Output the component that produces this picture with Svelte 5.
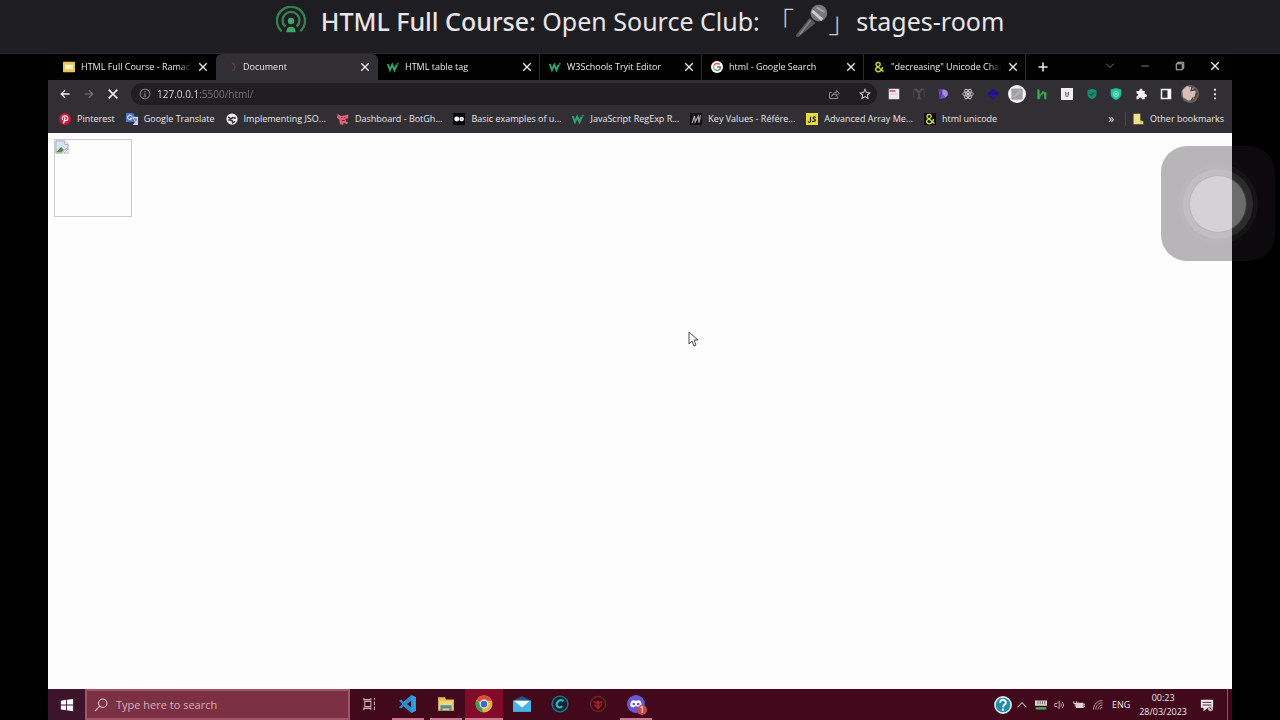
<script>
    const icons = {
        slides: '<rect x="0" y="1" width="16" height="14" rx="1" fill="#e8c65c"/><rect x="3" y="5" width="10" height="6" fill="#fff3c0"/>',
        spinner: '<path d="M9 2a6 6 0 0 1 1 11" fill="none" stroke="#623b42" stroke-width="2"/>',
        w3: '<path d="M1 4l3 8 3-7 3 7 3-7" fill="none" stroke="#2aa575" stroke-width="2.600"/><path d="M13 3h2l-1 3" fill="none" stroke="#2aa575" stroke-width="1.200"/>',
        google: '<circle cx="8" cy="8" r="8" fill="#fff"/><path d="M11.500 4.800A4.600 4.600 0 0 0 4 6" fill="none" stroke="#d8574c" stroke-width="2"/><path d="M4 6a4.600 4.600 0 0 0 0 4" fill="none" stroke="#d8a93b" stroke-width="2"/><path d="M4 10a4.600 4.600 0 0 0 7 1.500" fill="none" stroke="#579f6a" stroke-width="2"/><path d="M8 8h4.600a4.600 4.600 0 0 1-1.500 3.500" fill="none" stroke="#5871b5" stroke-width="2"/>',
        amp: '<rect width="16" height="16" fill="#080a03"/><path d="M14 14L5 6.500C2.500 4 5 1.500 7.500 2S10.500 5.500 8 7L5.500 8.500C1.500 11 4.500 15 8 14s4.500-4 4.500-6" fill="none" stroke="#bfd63e" stroke-width="1.900"/>',
        pinterest: '<circle cx="8" cy="8" r="8" fill="#cf153c"/><path d="M6 14l2-8M5 9C3 6 6 3.500 8.500 3.700c4 .3 4 6.300.5 6.500-1 0-1.700-.5-2-1" fill="none" stroke="#fff" stroke-width="1.700"/>',
        translate: '<path d="M0 0h10l3 12H0z" fill="#4f76d3"/><path d="M8 5h8v11H9l3-4z" fill="#c9d2eb"/><path d="M7.500 4A3 3 0 1 0 8 7H5.500" fill="none" stroke="#fff" stroke-width="1.300"/><path d="M10 8h4m-2-1c0 2 1 3 2 4m0-3c0 2-2 3-3 4" fill="none" stroke="#627090"/>',
        globe: '<circle cx="8" cy="8" r="7.500" fill="#eee"/><path d="M3 5q3 4 6 1l4 1M3 9l5 1 1 3 3-2" fill="none" stroke="#343236" stroke-width="2"/>',
        ghost: '<path d="M1 1l4 3 6-1 4-1v5l-4 1 1 3 3 2-2 2-4-2-1 3-4-1-1-6-3-3z" fill="#dd6473"/><path d="M6 6h1m3 0h1M7 10h3" stroke="#531e2b" stroke-width="1.500"/>',
        dots: '<rect width="16" height="16" fill="#050505"/><circle cx="5" cy="8" r="3.300" fill="#fff"/><circle cx="11.500" cy="8" r="3" fill="#fff"/><path d="M11.500 7v2" stroke="#444"/>',
        mdn: '<rect width="16" height="16" fill="#111014"/><path d="M3 13L6 4l1 8 4-8 1 9 2-10" fill="none" stroke="#aaa8ad" stroke-width="1.600"/>',
        js: '<rect width="16" height="16" fill="#e9dd35"/><path d="M6 5v6c0 2-3 2-3 0M13 6c-3-2-5 1-2 2s2 4-3 3" fill="none" stroke="#222216" stroke-width="1.600"/>',
        folder: '<path d="M2 1h9v9l4 1v4H2z" fill="#eee184"/><path d="M11 10l4 1-4 4z" fill="#cbbb5d"/>',
        back: '<path d="M14 8H3m5-5L3 8l5 5" fill="none" stroke="#eee" stroke-width="1.700"/>',
        forward: '<path d="M2 8h11M8 3l5 5-5 5" fill="none" stroke="#78767a" stroke-width="1.500"/>',
        close: '<path d="M3 3l10 10M13 3L3 13" fill="none" stroke="#eee" stroke-width="1.800"/>',
        plus: '<path d="M8 2v12M2 8h12" stroke="#eee" stroke-width="2"/>',
        down: '<path d="M3 5l5 5 5-5" fill="none" stroke="#77757a" stroke-width="1.300"/>',
        minimise: '<path d="M3 8h10" stroke="#77757a" stroke-width="1.400"/>',
        restore: '<path d="M3 5h8v8H3zM5 5V3h8v8h-2" fill="none" stroke="#c4c3c6" stroke-width="1.300"/>',
        info: '<circle cx="8" cy="8" r="6.500" fill="none" stroke="#8c898f" stroke-width="1.300"/><path d="M8 7v5M8 4v1.600" stroke="#8c898f" stroke-width="1.600"/>',
        share: '<path d="M5 6H2v8h11v-3M5 11c1-4 4-5 6-5V3l4 4-4 4V8c-2 0-4 0-6 3z" fill="none" stroke="#96949a" stroke-width="1.200"/>',
        star: '<path d="M8 1.800l1.900 4.100 4.500.5-3.300 3 1 4.400L8 11.500l-4.100 2.300 1-4.400-3.300-3 4.500-.5z" fill="none" stroke="#c9c7cb" stroke-width="1.400"/>',
        news: '<rect x="1" y="1" width="14" height="14" fill="#eee7ed"/><path d="M2 4h8" stroke="#c6485f" stroke-width="2"/><path d="M3 8h10" stroke="#d7b9c4"/>',
        ymark: '<path d="M1 2h4l3 5 3-5h4M5 14h6M8 6v8" fill="none" stroke="#504d52" stroke-width="2.600"/><path d="M1 3v10m14-10v10" stroke="#403d42" stroke-width="2"/>',
        purple: '<path d="M2 2h7l5 2 1 5-4 4-7 2z" fill="#7652c6"/><path d="M8 2c7 0 8 8 3 10L7 7z" fill="#a98be0"/><path d="M2 2l4 4-2 8" stroke="#563aa8" stroke-width="2" fill="none"/>',
        react: '<g fill="none" stroke="#c8c6cc" stroke-width="1.200"><ellipse cx="8" cy="8" rx="7" ry="2.800"/><ellipse cx="8" cy="8" rx="7" ry="2.800" transform="rotate(60 8 8)"/><ellipse cx="8" cy="8" rx="7" ry="2.800" transform="rotate(120 8 8)"/></g><circle cx="8" cy="8" r="1.500" fill="#eee"/>',
        diamond: '<path d="M8 1l8 7-8 7-8-7z" fill="#22108f"/><path d="M2 9h12l-6 5z" fill="#2c1b8a"/>',
        square: '<circle cx="8" cy="8" r="8" fill="#f4f3f5"/><rect x="3" y="3" width="10" height="10" rx="1" fill="#a2a1a2"/><path d="M5 11l6-6" stroke="#b4b3b4" stroke-width="2"/>',
        grass: '<path d="M2 15V1l3 2v6l4-5 5 2v9h-3V8l-4 1-2 6z" fill="#379b51"/><path d="M3 2v12M12 7v7" stroke="#42ae5b" stroke-width="1.500"/>',
        ublock: '<rect width="16" height="16" fill="#f1eef2"/><path d="M6 5v4c0 3 4 3 4 0V5M8 6v3" fill="none" stroke="#79757b" stroke-width="1.400"/>',
        shield: '<path d="M8 1l6 2v5c0 4-3 6-6 7-3-1-6-3-6-7V3z" fill="#188d76"/><path d="M5 8l2 2 4-4" fill="none" stroke="#074f47" stroke-width="1.600"/>',
        shieldx: '<path d="M8 0l7 2v6c0 4-4 7-7 8-3-1-7-4-7-8V2z" fill="#1bc39a"/><path d="M8 4l3 2v4l-3 2-3-2V6zM6 6l4 4m0-4l-4 4" fill="none" stroke="#b7f1df"/>',
        puzzle: '<path d="M2 4h4c-1-4 5-4 4 0h3v4c4-1 4 5 0 4v3H9c0-3-4-3-4 0H2v-4c3 0 3-4 0-4z" fill="#f2f0f3"/>',
        panel: '<path d="M2 2h12v12H2z" fill="none" stroke="#f5f5f5" stroke-width="2"/><path d="M10 2h4v12h-4z" fill="#fff"/>',
        profile: '<circle cx="8" cy="8" r="8" fill="#6d605b"/><path d="M1 5l4-4 5 1 3 4-1 6-5 2-5-3z" fill="#d7beb8"/><path d="M10 1l-1 4 4-1m-1 8l2-5m-5 7l2-3" stroke="#453b39" stroke-width="1.200" fill="none"/>',
        menu: '<path d="M8 1v2.500M8 7v2.500m0 3V15" stroke="#eee" stroke-width="2.500"/>',
        windows: '<path d="M1 3l6-1v5.500H1zM8 2l7-1v6.500H8zM1 8.500h6V14l-6-1zM8 8.500h7V15l-7-1z" fill="#fff"/>',
        search: '<circle cx="10" cy="6" r="4.800" fill="none" stroke="#e7bdc7" stroke-width="1.300"/><path d="M7 9l-6 6" stroke="#e7bdc7" stroke-width="1.400"/>',
        taskview: '<path d="M1 1v2h8V1M1 15v-2h8v2M2 5h7v6H2zM13 1v2m0 2v4m0 2v4" fill="none" stroke="#cfabba" stroke-width="1.200"/>',
        vscode: '<path d="M11 0l4 2v12l-4 2-7-6-2 2-2-1 3-3-3-3 2-1 2 2zM11 5L7 8l4 3z" fill="#278ed0"/><path d="M11 0l4 2v12l-4 2z" fill="#359bda"/>',
        explorer: '<path d="M1 2h6l1 2h7v10H1z" fill="#e6bd51"/><path d="M2 5h12v8H2z" fill="#f1d877"/><path d="M3 9h10v5h-2v-2H5v2H3z" fill="#498eaf"/>',
        chrome: '<circle cx="8" cy="8" r="7.500" fill="#e4b63e"/><path d="M8 8L1.500 4.500A7.500 7.500 0 0 1 15 5H8z" fill="#dc4d3e"/><path d="M1.500 4.500L6 10l1 5.400A7.500 7.500 0 0 1 1.500 4.500z" fill="#3d9c58"/><circle cx="8" cy="8" r="3.900" fill="#fff"/><circle cx="8" cy="8" r="3" fill="#3f68cc"/>',
        mail: '<path d="M0 5l8-4 8 4v9H0z" fill="#1d5f92"/><path d="M0 5h16v10H0z" fill="#45b5e6"/><path d="M1 5h14l-7 6z" fill="#fff"/>',
        ccleaner: '<circle cx="8" cy="8" r="7" fill="#11252e" stroke="#16798c" stroke-width="1.200"/><path d="M11 5.500C8 3 5 6 5 8.500s3 3.500 5 1.500" fill="none" stroke="#25b6d0" stroke-width="1.900"/>',
        fox: '<circle cx="8" cy="8" r="6.700" fill="#370a12" stroke="#742024" stroke-width="1.200"/><path d="M4 5l3 1 1-2 1 2 3-1-1 5-3 3-3-3z" fill="#a91c2c"/><path d="M5 7l2 2m4-2L9 9" stroke="#360713"/>',
        discord: '<circle cx="8" cy="8" r="8" fill="#6757d3"/><path d="M3 10c0-4 1-6 4-5h2c3-1 4 1 4 5l-3 1-1-1H7l-1 1z" fill="#fff"/><circle cx="6" cy="8" r="1.200" fill="#6757d3"/><circle cx="10" cy="8" r="1.200" fill="#6757d3"/>',
        help: '<circle cx="8" cy="8" r="7.200" fill="#238dab" stroke="#d8edf2" stroke-width="1.400"/><path d="M5.500 6c0-4 5-3 5 0 0 2-2.500 1.600-2.500 4M8 11v2" fill="none" stroke="#fff" stroke-width="1.700"/>',
        up: '<path d="M2 11l6-6 6 6" fill="none" stroke="#d6b5bf" stroke-width="1.400"/>',
        ram: '<path d="M0 2h16v7H0z" fill="#d8d5d4"/><path d="M4 3v4m3-4v4m3-4v4m3-4v4" stroke="#58434b"/><path d="M1 11h14v3H1z" fill="#4ab85c"/>',
        sound: '<path d="M1 6h3l3-3v10L4 10H1z" fill="none" stroke="#cda9b5" stroke-width="1.200"/><path d="M9 6q2 2 0 4m2-6q4 4 0 8" fill="none" stroke="#cda9b5" stroke-width="1.200"/>',
        battery: '<path d="M5 5h9v7H4V8" fill="#ded5d8"/><path d="M14 7h2v3h-2M1 3v3h4V3M3 6v4" stroke="#ded5d8" fill="none" stroke-width="1.300"/>',
        wifi: '<path d="M2 14C2 7 7 2 14 2M5 14c0-5 4-9 9-9M8 14c0-3 3-6 6-6M11 14c0-2 1-3 3-3" fill="none" stroke="#c19caa" stroke-width="1.200"/>',
        notice: '<path d="M1 2h14v9H9l-5 4v-4H1z" fill="#f3e9ed"/><path d="M3 5h10M3 8h10" stroke="#552335" stroke-width="1.100"/><circle cx="12" cy="12" r="3" fill="#c3adb5"/><path d="M11 11l2 2" stroke="#552335"/>',
        broken: '<path d="M1 1h10l4 4v4l-4 2-3 4H1z" fill="#d4e4f5" stroke="#9b9fa3"/><path d="M2 13l5-5 3 3-3 3H2z" fill="#538b4c"/><path d="M11 1v4h4M10 15l5-5v5z" fill="#fff" stroke="#aaa"/>',
        live: '<path d="M3 13.500a7.500 7.500 0 1 1 10 0M5 11a4.500 4.500 0 1 1 6 0" fill="none" stroke="#36804f" stroke-width="1.300"/><circle cx="8" cy="8" r="1.700" fill="#43a466"/><path d="M5.500 14q0-3 2.500-3t2.500 3z" fill="#43a466"/>',
        mic: '<path d="M7.500 6.500L1.500 14q-.5 1.500 1 1L10 9z" fill="#59595b"/><path d="M8 7.500L3 14" stroke="#858587" stroke-width=".7"/><circle cx="11.500" cy="4.500" r="3.700" fill="#78787a"/><path d="M8.500 3.500l4.500 4" stroke="#ccc" stroke-width="1.200"/><path d="M10.500 2l3.500 2" stroke="#aaa" stroke-width=".8"/>'
    };

    const tabs = [
        { icon: "slides", title: "HTML Full Course - Ramad" },
        { icon: "spinner", title: "Document", active: true },
        { icon: "w3", title: "HTML table tag" },
        { icon: "w3", title: "W3Schools Tryit Editor" },
        { icon: "google", title: "html - Google Search" },
        { icon: "amp", title: "\"decreasing\" Unicode Char" }
    ];

    const bookmarks = [
        ["pinterest", "Pinterest"],
        ["translate", "Google Translate"],
        ["globe", "Implementing JSO..."],
        ["ghost", "Dashboard - BotGh..."],
        ["dots", "Basic examples of u..."],
        ["w3", "JavaScript RegExp R..."],
        ["mdn", "Key Values - Référe..."],
        ["js", "Advanced Array Me..."],
        ["amp", "html unicode"]
    ];

    const extensions = ["news", "ymark", "purple", "react", "diamond", "square", "grass", "ublock", "shield", "shieldx", "puzzle", "panel", "profile", "menu"];

    const apps = [
        { icon: "taskview" },
        { icon: "vscode", open: true },
        { icon: "explorer", open: true },
        { icon: "chrome", open: true, active: true },
        { icon: "mail" },
        { icon: "ccleaner" },
        { icon: "fox" },
        { icon: "discord", open: true, badge: 1 }
    ];

    const tray = ["help", "up", "ram", "sound", "battery", "wifi"];

    let url = $state("127.0.0.1:5500/html/");
    let query = $state("");
</script>

{#snippet icon(name, size = "")}
    <svg class="icon {size}" viewBox="0 0 16 16" aria-hidden="true">{@html icons[name]}</svg>
{/snippet}

<div class="stage">
    <header>
        {@render icon("live", "xl")}
        <h1><b>HTML Full Course:</b> Open Source Club: <span class="cjk">「</span>{@render icon("mic", "mic")}<span class="cjk">」</span>stages-room</h1>
    </header>

    <div class="desktop">
        <nav class="tabs">
            {#each tabs as tab}
                <div class="tab" class:active={tab.active}>
                    {@render icon(tab.icon)}
                    <a href="#tab">{tab.title}</a>
                    <button aria-label="Close tab">{@render icon("close")}</button>
                </div>
            {/each}
            <button class="new" aria-label="New tab">{@render icon("plus")}</button>
            <div class="window-buttons">
                <button aria-label="Search tabs">{@render icon("down")}</button>
                <button aria-label="Minimise">{@render icon("minimise")}</button>
                <button aria-label="Restore">{@render icon("restore")}</button>
                <button aria-label="Close window">{@render icon("close")}</button>
            </div>
        </nav>

        <div class="toolbar">
            <button aria-label="Back">{@render icon("back")}</button>
            <button aria-label="Forward">{@render icon("forward")}</button>
            <button aria-label="Stop">{@render icon("close", "md")}</button>
            <div class="address">
                {@render icon("info")}
                <input type="text" aria-label="Address" bind:value={url} />
                <button aria-label="Share">{@render icon("share")}</button>
                <button aria-label="Bookmark">{@render icon("star")}</button>
            </div>
            <div class="extensions">
                {#each extensions as name}
                    <button aria-label={name}>{@render icon(name, name == "square" || name == "profile" ? "lg" : "")}</button>
                {/each}
            </div>
        </div>

        <nav class="bookmarks">
            {#each bookmarks as [name, label]}
                <a href="#bookmark">{@render icon(name)}{label}</a>
            {/each}
            <button class="more" aria-label="More bookmarks">»</button>
            <a class="other" href="#other">{@render icon("folder")}Other bookmarks</a>
        </nav>

        <main>
            <div class="image" role="img" aria-label="Missing image">{@render icon("broken", "md")}</div>
            <svg class="cursor" viewBox="0 0 10 17" aria-hidden="true">
                <path d="M1 1v12l3-3 2 5 2-1-2-5h4z" fill="#fff" stroke="#48464a" />
            </svg>
        </main>

        <footer>
            <button class="start" aria-label="Start">{@render icon("windows", "md")}</button>
            <label class="search">
                {@render icon("search", "md")}
                <input type="text" placeholder="Type here to search" bind:value={query} />
            </label>
            {#each apps as app}
                <button class="app" class:open={app.open} class:active={app.active} aria-label={app.icon}>
                    {@render icon(app.icon, app.icon == "taskview" ? "md" : "lg")}
                    {#if app.badge}<span class="badge">{app.badge}</span>{/if}
                </button>
            {/each}
            <div class="tray">
                {#each tray as name}
                    <button aria-label={name}>{@render icon(name, name == "help" ? "lg" : "")}</button>
                {/each}
                <span class="lang">ENG</span>
                <time>00:23<br />28/03/2023</time>
                <button class="notice" aria-label="Notifications">{@render icon("notice", "md")}</button>
            </div>
        </footer>
    </div>

    <button class="touch" aria-label="Assistive menu"><span></span></button>
</div>

<style>
    :global(body) {
        background: #000;
    }

    * {
        box-sizing: border-box;
    }

    .stage {
        position: relative;
        display: flex;
        flex-direction: column;
        min-height: 100vh;
        overflow: hidden;
        background: #000;
        color: #e8e6ea;
        font: 9px/14px "Open Sans", "Noto Sans", sans-serif;
    }

    button {
        display: flex;
        flex: none;
        align-items: center;
        justify-content: center;
        padding: 0;
        border: 0;
        background: none;
        color: inherit;
        font: inherit;
    }

    input {
        min-width: 0;
        padding: 0;
        border: 0;
        outline: 0;
        background: none;
        color: inherit;
        font: inherit;
    }

    a {
        color: inherit;
        text-decoration: none;
    }

    .icon {
        flex: none;
        width: 12px;
        height: 12px;
    }

    .md {
        width: 14px;
        height: 14px;
    }

    .lg {
        width: 18px;
        height: 18px;
    }

    .xl {
        width: 30px;
        height: 30px;
    }

    .mic {
        width: 36px;
        height: 36px;
        margin: 0 -1px;
    }

    header {
        display: flex;
        align-items: center;
        justify-content: center;
        gap: 15px;
        height: 54px;
        padding-bottom: 11px;
        border-bottom: 1px solid #29282c;
        background: #1e1d21;
    }

    h1 {
        display: flex;
        align-items: center;
        margin: 0;
        white-space: pre;
        font: 25px/34px "Noto Sans", sans-serif;
    }

    h1 b {
        font-weight: 500;
    }

    .cjk {
        color: #cccacd;
        font-family: "Noto Sans CJK JP", sans-serif;
        font-size: 28px;
        font-weight: 300;
    }

    .desktop {
        display: flex;
        flex: 1;
        flex-direction: column;
        margin: 0 48px;
    }

    .tabs {
        display: flex;
        height: 26px;
        padding-left: 6px;
        background: #020203;
    }

    .tab {
        display: flex;
        flex: 0 1 162px;
        align-items: center;
        gap: 6px;
        min-width: 0;
        padding: 0 6px 0 9px;
        border-right: 1px solid #2b2a2d;
    }

    .tab:first-child {
        border-color: transparent;
    }

    .tab.active {
        border-color: transparent;
        border-radius: 6px 6px 0 0;
        background: #312f33;
    }

    .tab a {
        flex: 1;
        overflow: hidden;
        white-space: nowrap;
        mask-image: linear-gradient(90deg, #000 88%, transparent);
    }

    .new {
        width: 34px;
    }

    .window-buttons {
        display: flex;
        margin-left: auto;
    }

    .window-buttons button {
        width: 35px;
        height: 24px;
    }

    .toolbar {
        display: flex;
        align-items: center;
        height: 28px;
        padding: 0 5px;
        background: #312f33;
    }

    .toolbar button {
        width: 24px;
    }

    .address {
        display: flex;
        flex: 1;
        align-items: center;
        gap: 6px;
        height: 22px;
        margin: 0 5px 0 6px;
        padding-left: 8px;
        border-radius: 11px;
        background: #201e22;
    }

    .address input {
        flex: 1;
        background: linear-gradient(90deg, #e6e4e8 42px, #77757a 42px) text;
        color: transparent;
        font-size: 10px;
    }

    .address button:nth-of-type(1) {
        width: 26px;
    }

    .extensions {
        display: flex;
        flex: 0 0 345px;
        justify-content: space-between;
    }

    .bookmarks {
        display: flex;
        align-items: center;
        gap: 11px;
        height: 25px;
        padding: 0 8px 4px 11px;
        background: #312f33;
        white-space: nowrap;
    }

    .bookmarks a {
        display: flex;
        align-items: center;
        gap: 6px;
    }

    .more {
        margin-left: auto;
        font-size: 12px;
    }

    .other {
        padding-left: 6px;
        border-left: 1px solid #49474b;
    }

    main {
        position: relative;
        flex: 1;
        padding: 6px;
        background: #fefdfe;
    }

    .image {
        display: flex;
        width: 78px;
        height: 78px;
        border: 1px solid #ccc9cd;
    }

    .cursor {
        position: absolute;
        top: 198px;
        left: 640px;
        width: 10px;
        height: 17px;
    }

    footer {
        display: flex;
        height: 31px;
        background: #42091d;
    }

    .start {
        width: 37px;
        background: #3c152d;
    }

    .search {
        display: flex;
        flex: 0 1 265px;
        align-items: center;
        gap: 8px;
        margin-right: 1px;
        padding-left: 7px;
        border: 2px solid #a15368;
        background: #7b3043;
        color: #e2bdc7;
        font-size: 11px;
    }

    .search input {
        flex: 1;
    }

    .search input::placeholder {
        color: #d9afba;
        opacity: 1;
    }

    .app {
        position: relative;
        width: 38px;
        border-bottom: 2px solid transparent;
    }

    .app.open::after {
        position: absolute;
        right: 3px;
        bottom: -2px;
        left: 3px;
        height: 2px;
        background: #cd7890;
        content: "";
    }

    .app.active {
        background: #820b2a;
    }

    .app.active::after {
        right: 0;
        left: 0;
    }

    .badge {
        position: absolute;
        right: 8px;
        bottom: 3px;
        width: 10px;
        border-radius: 5px;
        background: #ca4555;
        color: #fff;
        line-height: 10px;
    }

    .tray {
        display: flex;
        align-items: center;
        margin-left: auto;
        padding-right: 4px;
    }

    .tray button {
        width: 19px;
    }

    .lang {
        padding: 0 9px 0 4px;
    }

    time {
        text-align: center;
    }

    .tray .notice {
        width: 41px;
        height: 31px;
        border-right: 1px solid #8f5667;
    }

    .touch {
        position: absolute;
        top: 146px;
        right: 5px;
        width: 114px;
        height: 115px;
        border-radius: 26px;
        background: rgba(36, 32, 38, .32);
    }

    .touch span {
        width: 56px;
        height: 56px;
        border-radius: 50%;
        background: rgba(255, 255, 255, .4);
        box-shadow: 0 0 0 1px rgba(150, 150, 150, .2), 0 0 0 7px rgba(255, 255, 255, .1), 0 0 0 12px rgba(255, 255, 255, .04);
    }
</style>
